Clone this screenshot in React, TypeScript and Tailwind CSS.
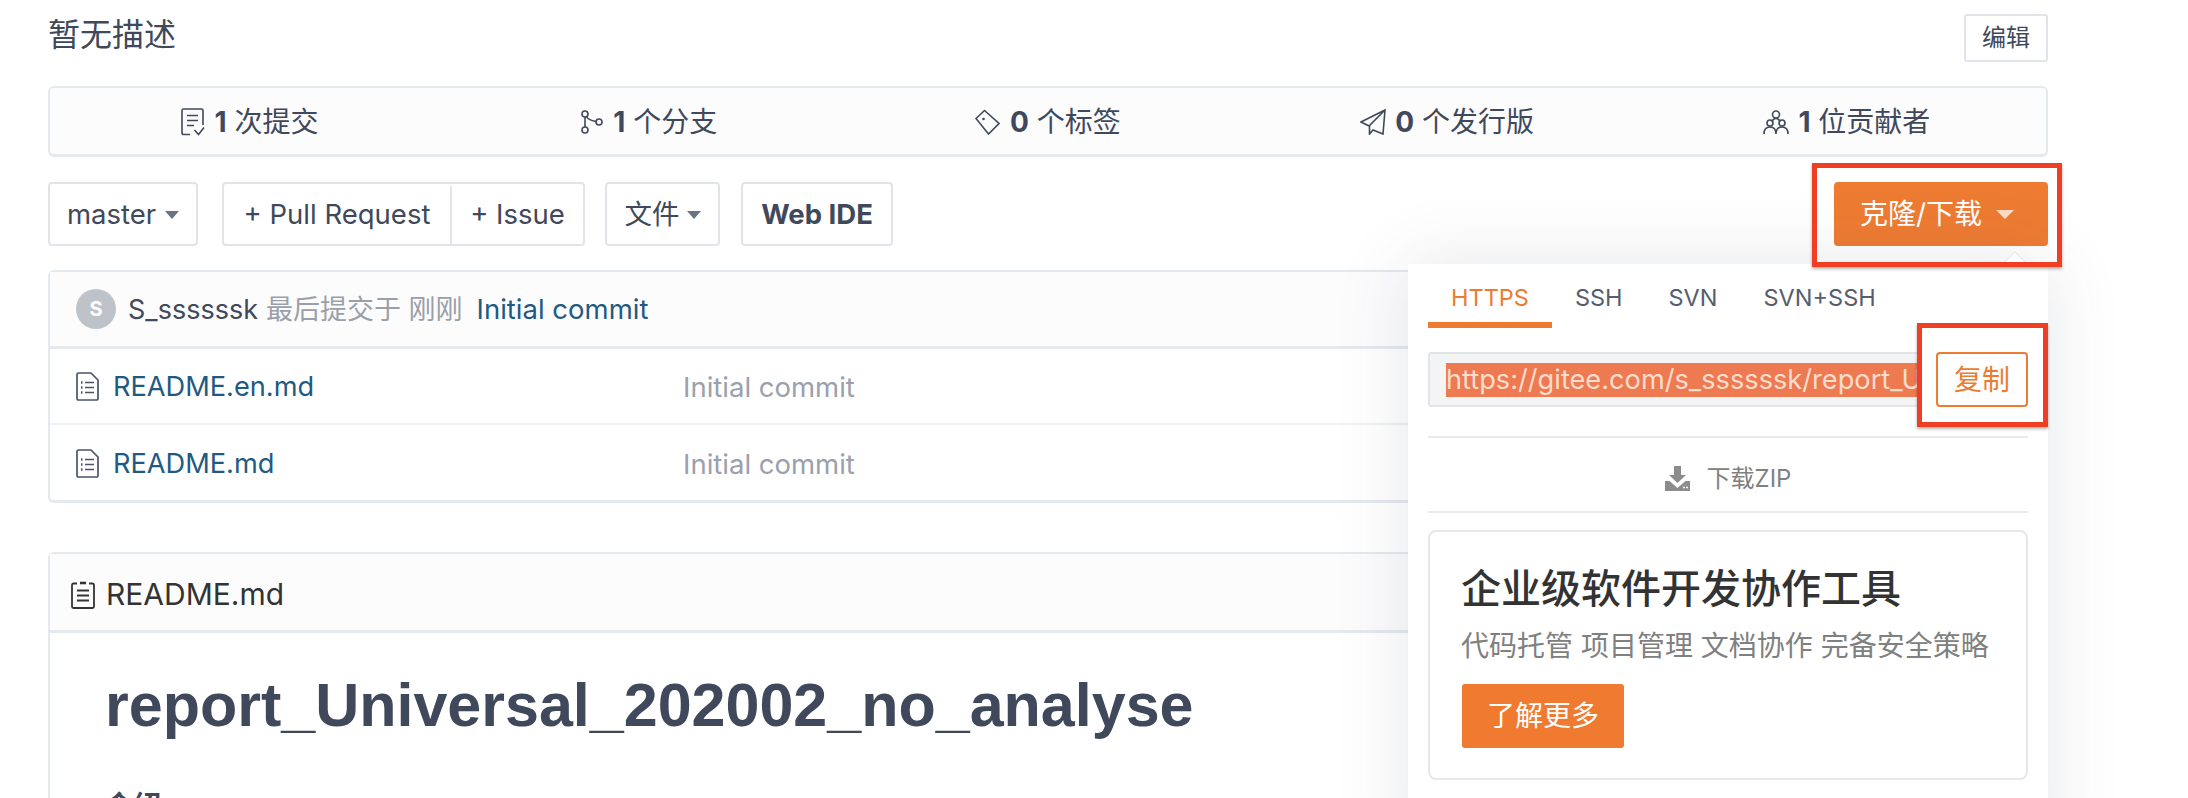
const stroke = '#40485b';

function CommitIcon() {
  return (
    <svg width="24" height="28" viewBox="0 0 24 28" fill="none" stroke={stroke} strokeWidth="1.6">
      <path d="M9 26.5H2.5a1.5 1.5 0 0 1-1.5-1.5V2.500A1.500 1.500 0 0 1 2.500 1h18A1.500 1.500 0 0 1 22 2.500V17" />
      <path d="M6 7.500h11M6 12.500h11M6 17.500h7" />
      <path d="M13.500 22l4 4.500 5.500-7" />
    </svg>
  );
}

function BranchIcon() {
  return (
    <svg width="23" height="24" viewBox="0 0 23 24" fill="none" stroke={stroke} strokeWidth="1.6">
      <circle cx="5" cy="4" r="3" />
      <circle cx="5" cy="20" r="3" />
      <circle cx="19" cy="12" r="3" />
      <path d="M5 7v10M6.500 6.500c1 2.500 4 4 9.500 5" />
    </svg>
  );
}

function TagIcon() {
  return (
    <svg width="25" height="26" viewBox="0 0 25 26" fill="none" stroke={stroke} strokeWidth="1.6">
      <path d="M1 9.500 9.500 1.500 24 14.500 13.500 25z" />
      <circle cx="8.500" cy="10" r="1.300" fill={stroke} stroke="none" />
    </svg>
  );
}

function PlaneIcon() {
  return (
    <svg width="26" height="26" viewBox="0 0 26 26" fill="none" stroke={stroke} strokeWidth="1.6">
      <path d="M25 1 1 13l8 4 16-16-2 24-10-4-3.500 4v-8" />
    </svg>
  );
}

function PeopleIcon() {
  return (
    <svg width="28" height="25" viewBox="0 0 28 25" fill="none" stroke={stroke} strokeWidth="1.6">
      <circle cx="14" cy="4.500" r="3.500" />
      <circle cx="8" cy="13" r="3" />
      <circle cx="20" cy="13" r="3" />
      <path d="M2 24c0-4.500 2.500-7 6-7 3.500 0 6 2.500 6 7 0-4.500 2.500-7 6-7 3.500 0 6 2.500 6 7" />
      <path d="M10 12c.5-2 2-3.500 4-3.500s3.500 1.500 4 3.500" />
    </svg>
  );
}

function FileIcon() {
  return (
    <svg width="23" height="29" viewBox="0 0 23 29" fill="none" stroke="#4b5368" strokeWidth="1.7">
      <path d="M2.500 1H15l7 7v18.500a1.500 1.500 0 0 1-1.500 1.500h-18A1.500 1.500 0 0 1 1 26.500v-24A1.500 1.500 0 0 1 2.500 1z" />
      <path d="M9 10.500h9M9 15.500h9M9 20.500h9" />
      <path d="M5 10.500h1.500M5 15.500h1.500M5 20.500h1.500" strokeWidth="2.400" />
    </svg>
  );
}

function ReadmeIcon() {
  return (
    <svg width="24" height="28" viewBox="0 0 24 28" fill="none" stroke="#333333" strokeWidth="1.8">
      <path d="M6 2.500H2.500A1.500 1.500 0 0 0 1 4v21.500A1.500 1.500 0 0 0 2.500 27h19a1.500 1.500 0 0 0 1.500-1.500V4a1.500 1.500 0 0 0-1.500-1.500H18" />
      <path d="M9 2h6" strokeWidth="2.600" />
      <path d="M6 9.500h12M6 14.500h12M6 19.500h12" />
    </svg>
  );
}

function DownloadIcon() {
  return (
    <svg width="25" height="25" viewBox="0 0 25 25" fill="#8c8c8c">
      <path d="M9 0h7v9h5l-8.500 8L4 9h5z" />
      <path d="M0 15h4.500l8 7 8-7H25v10H0z" />
      <circle cx="19" cy="21.500" r="1" fill="#ffffff" />
      <circle cx="22" cy="21.500" r="1" fill="#ffffff" />
    </svg>
  );
}

function Caret({ color = 'border-t-[#6b7280]' }: { color?: string }) {
  return <span className={`inline-block h-0 w-0 border-x-[7px] border-t-[8px] border-x-transparent ${color}`} />;
}

const stats = [
  { icon: <CommitIcon />, num: '1', label: '次提交', gap: 'gap-[10px]' },
  { icon: <BranchIcon />, num: '1', label: '个分支', gap: 'gap-[10px]' },
  { icon: <TagIcon />, num: '0', label: '个标签', gap: 'gap-[10px]' },
  { icon: <PlaneIcon />, num: '0', label: '个发行版', gap: 'gap-[9px]' },
  { icon: <PeopleIcon />, num: '1', label: '位贡献者', gap: 'gap-[8px]' },
];

const files = ['README.en.md', 'README.md'];
const tabs = ['HTTPS', 'SSH', 'SVN', 'SVN+SSH'];

const btn = 'flex h-[64px] items-center rounded-[4px] border-2 border-[#e1e5ea] bg-white pt-[2px] text-[27.5px] text-[#40485b]';

export default function App() {
  return (
    <div className="relative h-[798px] w-[2188px] overflow-hidden bg-white font-[Inter,'Noto_Sans_CJK_SC',sans-serif] text-[#40485b]">
      <div className="ml-[48px] w-[2000px]">
        {/* description */}
        <div className="flex h-[86px] items-start justify-between">
          <div className="mt-[12px] text-[32px] leading-[46px]">暂无描述</div>
          <div className="mt-[14px] flex h-[48px] w-[84px] items-center justify-center rounded-[3px] border-2 border-[#e1e5ea] text-[24px]">编辑</div>
        </div>

        {/* stats */}
        <div className="grid h-[71px] grid-cols-5 rounded-[6px] border-2 border-b-[3px] border-[#e4e9ee] bg-[#fcfcfd] pt-[2px]">
          {stats.map((s) => (
            <div key={s.label} className={`flex items-center justify-center ${s.gap}`}>
              {s.icon}
              <span className="text-[28px]">
                <b className="font-bold">{s.num}</b> {s.label}
              </span>
            </div>
          ))}
        </div>

        {/* toolbar */}
        <div className="mt-[25px] flex h-[64px] items-center">
          <div className={`${btn} w-[150px] justify-center gap-[9px]`}>
            master <Caret />
          </div>
          <div className={`${btn} ml-[24px] w-[363px]`}>
            <span className="flex h-full w-[228px] items-center justify-center border-r-2 border-[#e1e5ea]">+ Pull Request</span>
            <span className="flex flex-1 items-center justify-center">+ Issue</span>
          </div>
          <div className={`${btn} ml-[20px] w-[115px] justify-center gap-[7px]`}>
            文件 <Caret />
          </div>
          <div className={`${btn} ml-[21px] w-[152px] justify-center font-bold`}>Web IDE</div>
          <div className="ml-auto flex h-[64px] w-[214px] items-center gap-[14px] rounded-[4px] bg-[#ee7b32] pl-[26px] text-[28px] text-white">
            克隆/下载
            <span className="inline-block h-0 w-0 border-x-[9px] border-t-[9px] border-x-transparent border-t-[#fbdcc8]" />
          </div>
        </div>

        {/* commit box */}
        <div className="mt-[24px] h-[233px] rounded-[6px] border-2 border-b-[3px] border-[#e4e9ee]">
          <div className="flex h-[77px] items-center border-b-[3px] border-[#e4e9ee] bg-[#fcfcfd] pl-[26px] text-[27px]">
            <span className="flex h-[40px] w-[40px] items-center justify-center rounded-full bg-[#bdc3c9] text-[20px] font-bold text-white">S</span>
            <span className="ml-[12px] pt-[2px]">S_ssssssk</span>
            <span className="ml-[8px] pt-[2px] text-[#9a9fa9]">最后提交于 刚刚</span>
            <span className="ml-[14px] pt-[2px] text-[27.5px] text-[#1f5a82]">Initial commit</span>
          </div>
          {files.map((f, i) => (
            <div key={f} className={`flex h-[76px] items-center pl-[26px] text-[27.5px] ${i === 0 ? 'border-b-2 border-[#f0f2f4]' : ''}`}>
              <FileIcon />
              <span className="ml-[14px] w-[570px] pt-[3px] text-[27.2px] text-[#1f5a82]">{f}</span>
              <span className="pt-[3px] text-[#9aa0ad]">Initial commit</span>
            </div>
          ))}
        </div>

        {/* readme */}
        <div className="mt-[49px] h-[300px] rounded-t-[6px] border-x-2 border-t-2 border-[#e4e9ee]">
          <div className="flex h-[79px] items-center border-b-[3px] border-[#e4e9ee] bg-[#fcfcfd] pt-[5px] pl-[21px] text-[30px] text-[#333333]">
            <ReadmeIcon />
            <span className="ml-[11px]">README.md</span>
          </div>
          <div className="pl-[55px]">
            <h1 className="mt-[36px] font-['Liberation_Sans',sans-serif] text-[61px] leading-[72px] font-bold whitespace-nowrap">report_Universal_202002_no_analyse</h1>
            <div className="mt-[45px] text-[28px] leading-[40px] font-bold">介绍</div>
          </div>
        </div>
      </div>

      {/* clone dropdown */}
      <div className="absolute top-[264px] left-[1408px] h-[600px] w-[640px] bg-white px-[20px] shadow-[0_0_70px_rgba(60,70,90,0.13)]">
        <div className="absolute top-[-9px] left-[598px] h-[18px] w-[18px] rotate-45 border-t border-l border-[#e5e7eb] bg-white" />
        <div className="relative flex h-[64px] text-[23.5px]">
          {tabs.map((t, i) => (
            <div
              key={t}
              className={`flex items-center border-b-[6px] px-[23px] pt-[9px] ${i === 0 ? 'border-[#ee7b32] text-[#ee7b32]' : 'border-transparent text-[#565e6e]'}`}
            >
              {t}
            </div>
          ))}
        </div>
        <div className="mt-[24px] flex h-[55px] items-center justify-between">
          <div className="flex h-full w-[492px] items-center overflow-hidden rounded-l-[3px] border-2 border-[#e1e5ea] bg-[#f4f4f5] pl-[16px] text-[27.2px] whitespace-nowrap">
            <span className="bg-[#ee7a52] leading-[34px] text-[#fbdccd]">https://gitee.com/s_ssssssk/report_Universal_202002</span>
          </div>
          <div className="flex h-full w-[92px] items-center justify-center rounded-[4px] border-2 border-[#ee7b32] text-[28px] text-[#ee7b32]">复制</div>
        </div>
        <div className="mt-[29px] flex h-[77px] items-center justify-center gap-[17px] border-y-2 border-[#e9eaec] pt-[8px] text-[24px] text-[#808080]">
          <DownloadIcon />
          下载ZIP
        </div>
        <div className="mt-[17px] h-[250px] rounded-[8px] border-2 border-[#e5e7ea] px-[31px] pt-[29px]">
          <div className="text-[40px] leading-[56px] font-medium text-[#333333]">企业级软件开发协作工具</div>
          <div className="mt-[9px] text-[28px] leading-[40px] text-[#808080]">代码托管 项目管理 文档协作 完备安全策略</div>
          <div className="mt-[18px] ml-[1px] flex h-[64px] w-[162px] items-center justify-center rounded-[3px] bg-[#f07b30] text-[28px] text-white">了解更多</div>
        </div>
      </div>

      {/* red annotation boxes */}
      <div className="absolute top-[163px] left-[1812px] h-[104px] w-[250px] border-[5px] border-[#ee3f24] shadow-[0_2px_3px_rgba(0,0,0,0.3)]" />
      <div className="absolute top-[323px] left-[1917px] h-[104px] w-[131px] border-[5px] border-[#ee3f24] shadow-[0_2px_3px_rgba(0,0,0,0.3)]" />
    </div>
  );
}
